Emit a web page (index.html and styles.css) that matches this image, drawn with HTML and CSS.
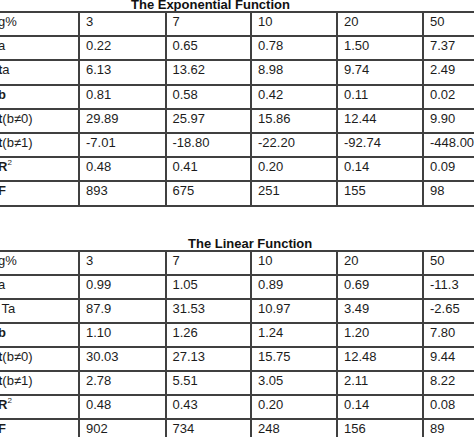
FILE: index.html
```html
<!DOCTYPE html>
<html>
<head>
<meta charset="utf-8">
<link rel="stylesheet" href="styles.css">
</head>
<body>
<div class="page">
  <section class="block block-exp">
    <h2 class="title title-exp">The Exponential Function</h2>
    <table class="data data-exp">
      <colgroup>
        <col class="c0"><col class="c1"><col class="c2"><col class="c3"><col class="c4"><col class="c5">
      </colgroup>
      <tbody>
        <tr><td>g%</td><td>3</td><td>7</td><td>10</td><td>20</td><td>50</td></tr>
        <tr><td>a</td><td>0.22</td><td>0.65</td><td>0.78</td><td>1.50</td><td>7.37</td></tr>
        <tr><td><b>t</b>a</td><td>6.13</td><td>13.62</td><td>8.98</td><td>9.74</td><td>2.49</td></tr>
        <tr><td><b>b</b></td><td>0.81</td><td>0.58</td><td>0.42</td><td>0.11</td><td>0.02</td></tr>
        <tr><td><b>t</b>(b≠0)</td><td>29.89</td><td>25.97</td><td>15.86</td><td>12.44</td><td>9.90</td></tr>
        <tr><td><b>t</b>(b≠1)</td><td>-7.01</td><td>-18.80</td><td>-22.20</td><td>-92.74</td><td>-448.00</td></tr>
        <tr><td><b>R</b><sup>2</sup></td><td>0.48</td><td>0.41</td><td>0.20</td><td>0.14</td><td>0.09</td></tr>
        <tr><td><b>F</b></td><td>893</td><td>675</td><td>251</td><td>155</td><td>98</td></tr>
      </tbody>
    </table>
  </section>
  <section class="block block-lin">
    <h2 class="title title-lin">The Linear Function</h2>
    <table class="data data-lin">
      <colgroup>
        <col class="c0"><col class="c1"><col class="c2"><col class="c3"><col class="c4"><col class="c5">
      </colgroup>
      <tbody>
        <tr><td>g%</td><td>3</td><td>7</td><td>10</td><td>20</td><td>50</td></tr>
        <tr><td>a</td><td>0.99</td><td>1.05</td><td>0.89</td><td>0.69</td><td>-11.3</td></tr>
        <tr><td>&nbsp;Ta</td><td>87.9</td><td>31.53</td><td>10.97</td><td>3.49</td><td>-2.65</td></tr>
        <tr><td><b>b</b></td><td>1.10</td><td>1.26</td><td>1.24</td><td>1.20</td><td>7.80</td></tr>
        <tr><td><b>t</b>(b≠0)</td><td>30.03</td><td>27.13</td><td>15.75</td><td>12.48</td><td>9.44</td></tr>
        <tr><td><b>t</b>(b≠1)</td><td>2.78</td><td>5.51</td><td>3.05</td><td>2.11</td><td>8.22</td></tr>
        <tr><td><b>R</b><sup>2</sup></td><td>0.48</td><td>0.43</td><td>0.20</td><td>0.14</td><td>0.08</td></tr>
        <tr><td><b>F</b></td><td>902</td><td>734</td><td>248</td><td>156</td><td>89</td></tr>
      </tbody>
    </table>
  </section>
</div>
</body>
</html>
```

FILE: styles.css
```css
html, body {
  margin: 0;
  padding: 0;
  background: #ffffff;
}
body {
  width: 474px;
  height: 437px;
  overflow: hidden;
  font-family: "Liberation Sans", Arial, sans-serif;
  color: #1c1c1c;
}
.page {
  display: flex;
  flex-direction: column;
}
.block {
  display: flex;
  flex-direction: column;
}
.block-exp {
  margin-top: -1px;
}
.block-lin {
  margin-top: 31px;
}
.title {
  margin: 0;
  font-size: 13px;
  line-height: 12px;
  font-weight: bold;
  color: #111;
  white-space: nowrap;
}
.title-exp {
  padding-left: 131px;
}
.title-lin {
  padding-left: 188px;
}
.data {
  border-collapse: collapse;
  table-layout: fixed;
  width: 517px;
  margin-left: -9px;
  font-size: 13px;
  line-height: 16px;
}
.c0 { width: 87px; }
.c1 { width: 86.5px; }
.c2 { width: 85.5px; }
.c3 { width: 86px; }
.c4 { width: 86px; }
.c5 { width: 86px; }
.data td {
  border: 2px solid #404040;
  padding: 1px 6px 5px 6px;
  white-space: nowrap;
  overflow: hidden;
  vertical-align: top;
  text-align: left;
}
.data td:first-child {
  padding-left: 5px;
}
.data-exp td {
  padding-bottom: 5.2px;
}
.data b {
  font-weight: bold;
}
.data sup {
  font-size: 8px;
  line-height: 0;
  vertical-align: 6px;
}
```
